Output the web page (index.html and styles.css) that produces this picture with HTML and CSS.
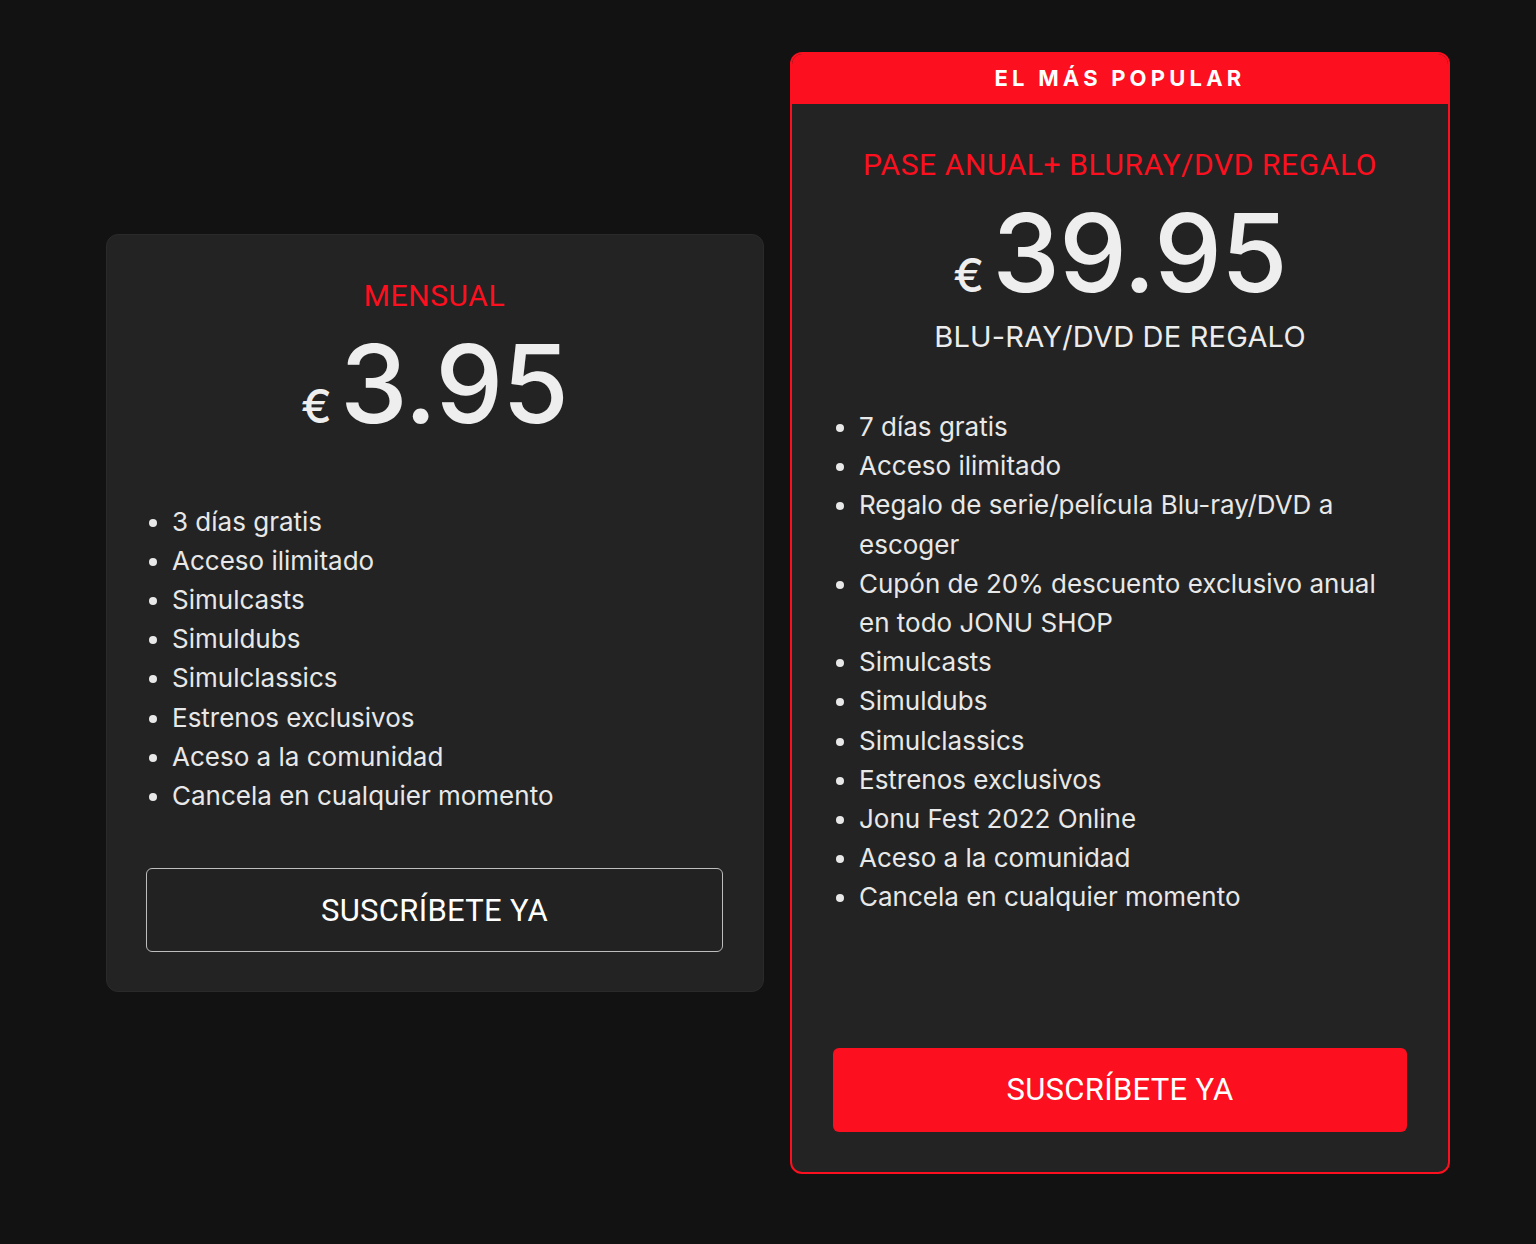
FILE: index.html
```html
<!DOCTYPE html>
<html lang="es">
<head>
<meta charset="utf-8">
<title>Planes</title>
<link rel="stylesheet" href="styles.css">
</head>
<body>
<main class="pricing">
  <section class="plan">
    <h2 class="plan-name">MENSUAL</h2>
    <div class="price"><span class="currency">€</span><span class="amount">3.95</span></div>
    <ul class="features">
      <li>3 días gratis</li>
      <li>Acceso ilimitado</li>
      <li>Simulcasts</li>
      <li>Simuldubs</li>
      <li>Simulclassics</li>
      <li>Estrenos exclusivos</li>
      <li>Aceso a la comunidad</li>
      <li>Cancela en cualquier momento</li>
    </ul>
    <a class="btn btn-outline" href="#">SUSCRÍBETE YA</a>
  </section>

  <section class="plan plan-popular">
    <div class="badge">EL MÁS POPULAR</div>
    <div class="plan-body">
      <h2 class="plan-name">PASE ANUAL+ BLURAY/DVD REGALO</h2>
      <div class="price"><span class="currency">€</span><span class="amount">39.95</span></div>
      <p class="subtitle">BLU-RAY/DVD DE REGALO</p>
      <ul class="features">
        <li>7 días gratis</li>
        <li>Acceso ilimitado</li>
        <li>Regalo de serie/película Blu-ray/DVD a escoger</li>
        <li>Cupón de 20% descuento exclusivo anual en todo JONU SHOP</li>
        <li>Simulcasts</li>
        <li>Simuldubs</li>
        <li>Simulclassics</li>
        <li>Estrenos exclusivos</li>
        <li>Jonu Fest 2022 Online</li>
        <li>Aceso a la comunidad</li>
        <li>Cancela en cualquier momento</li>
      </ul>
      <a class="btn btn-solid" href="#">SUSCRÍBETE YA</a>
    </div>
  </section>
</main>
</body>
</html>
```

FILE: styles.css
```css
* { box-sizing: border-box; }

html, body {
  margin: 0;
  background: #121212;
}

body {
  font-family: Inter, "Noto Sans", sans-serif;
  color: #ececec;
  min-height: 1244px;
}

.pricing {
  display: flex;
  align-items: center;
  gap: 26px;
  padding: 52px 0 0 106px;
}

.plan {
  width: 658px;
  background: #232323;
  border: 1px solid #2a2a2a;
  border-radius: 12px;
  padding: 40px 40px 39px 39px;
  display: flex;
  flex-direction: column;
}

.plan-name {
  margin: 0;
  text-align: center;
  color: #fc0f1e;
  font-family: Roboto, "Liberation Sans", sans-serif;
  font-weight: 400;
  font-size: 30px;
  line-height: 42px;
  letter-spacing: 0.6px;
}

.price {
  display: flex;
  justify-content: center;
  align-items: baseline;
  gap: 8px;
  margin-top: 13px;
  color: #eeeeee;
  line-height: 1;
}

.currency {
  font-size: 46px;
  font-weight: 500;
}

.amount {
  font-size: 108px;
  font-weight: 500;
  letter-spacing: -1px;
}

.features {
  margin: 64px 0 0;
  padding: 0 0 0 26px;
  font-size: 26px;
  line-height: 39.2px;
  color: #e8e8e8;
}

.btn {
  display: flex;
  align-items: center;
  justify-content: center;
  height: 84px;
  border-radius: 6px;
  text-decoration: none;
  color: #ffffff;
  font-family: Roboto, "Liberation Sans", sans-serif;
  font-size: 31px;
  letter-spacing: 0.3px;
}

.btn-outline {
  margin-top: 53px;
  border: 1px solid #bdbdbd;
  background: #222222;
}

.plan-popular {
  width: 660px;
  padding: 0;
  border: 2px solid #fc0f1e;
  overflow: hidden;
}

.badge {
  background: #fc0f1e;
  color: #ffffff;
  text-align: center;
  height: 50px;
  line-height: 49px;
  font-weight: 700;
  font-size: 22px;
  letter-spacing: 4.2px;
}

.plan-body {
  padding: 40px 41px 40px;
}

.subtitle {
  margin: 10px 0 0;
  text-align: center;
  font-size: 29px;
  line-height: 40px;
  letter-spacing: 0.2px;
  color: #ececec;
}

.plan-popular .features {
  margin-top: 50px;
}

.btn-solid {
  margin-top: 131px;
  background: #fc0f1e;
}
```
